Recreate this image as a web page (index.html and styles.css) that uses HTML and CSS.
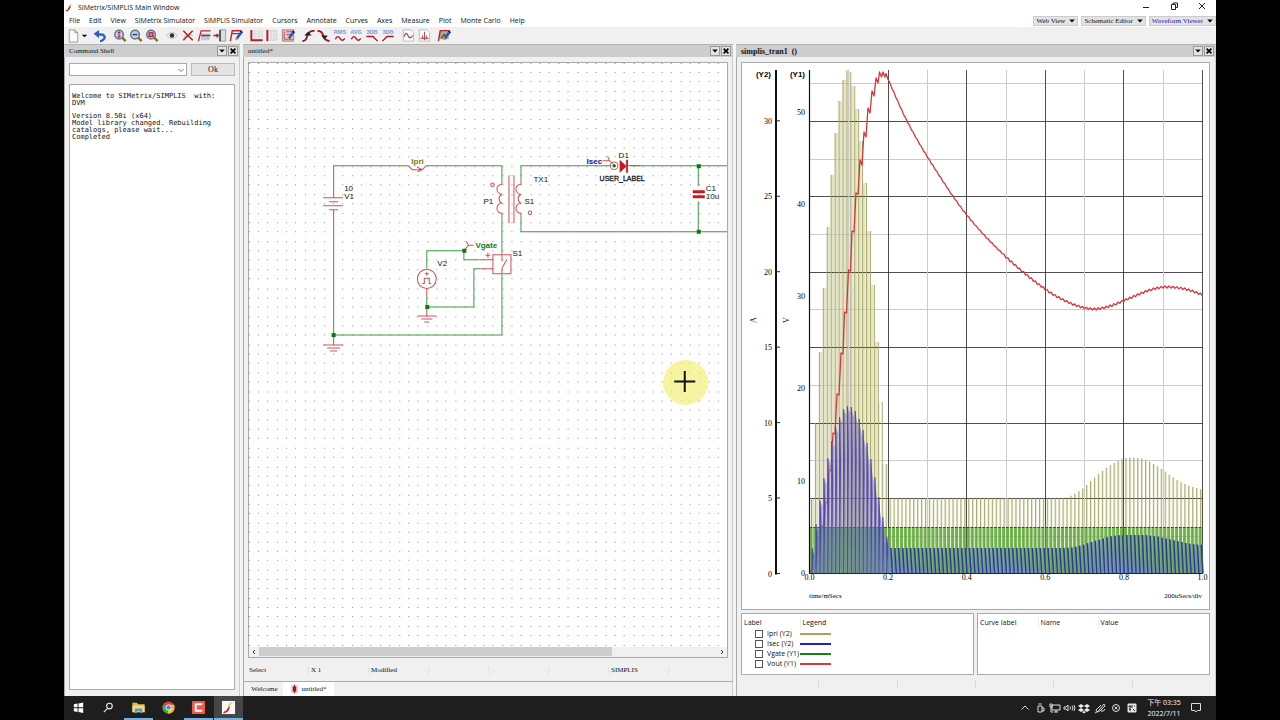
FILE: index.html
```html
<!DOCTYPE html>
<html lang="en">
<head>
<meta charset="utf-8">
<title>SIMetrix/SIMPLIS Main Window</title>
<link rel="stylesheet" href="styles.css">
</head>
<body>
<svg class="defs" aria-hidden="true">
  <defs>
    <symbol id="lens" viewBox="0 0 16 16"><path d="M10 10l4 4" stroke="#8a6a20" stroke-width="2.4"/><circle cx="7" cy="7" r="4.6" fill="#c3cfee" stroke="#6d7680" stroke-width="1.6"/></symbol>
    <symbol id="pencil" viewBox="0 0 16 16"><path d="M7 13l1-3 5-7 2 2-5 7z" fill="#2e56c8"/><path d="M7 13l1-3 2 2z" fill="#e8b830"/><path d="M13 3l2 2" stroke="#223" stroke-width="1.5"/></symbol>
    <symbol id="drop" viewBox="0 0 10 10"><path d="M1.500 3h7L5 7z" fill="#000"/></symbol>
    <symbol id="cross" viewBox="0 0 10 10"><path d="M2 2l6 6M8 2l-6 6" stroke="#000" stroke-width="2.2"/></symbol>
    <symbol id="logo" viewBox="0 0 14 14"><path d="M13 0C8 1 9 5 8 7l-2-1C7 3 8 1 13 0z" fill="#f0b020"/><path d="M9 5C8 9 6 13 1 13c0-2 1-2 2-2 2-1 2-4 4-6z" fill="#c8201c"/></symbol>
  </defs>
</svg>
<div class="window">
  <header class="titlebar">
    <svg class="app-icon"><use href="#logo"/></svg>
    <h1 class="title">SIMetrix/SIMPLIS Main Window</h1>
    <div class="win-controls">
      <button class="win-btn" aria-label="Minimize"><svg viewBox="0 0 10 10"><path d="M2 6.500h6" stroke="#222"/></svg></button>
      <button class="win-btn" aria-label="Restore"><svg viewBox="0 0 10 10"><path d="M2.500 3.500h4v5h-4zM4 3.500V2h4.500v4.500h-2" fill="none" stroke="#222"/></svg></button>
      <button class="win-btn" aria-label="Close"><svg viewBox="0 0 10 10"><path d="M2 2l6 6M8 2l-6 6" stroke="#222"/></svg></button>
    </div>
  </header>
  <nav class="menubar">
    <button>File</button><button>Edit</button><button>View</button><button>SIMetrix Simulator</button><button>SIMPLIS Simulator</button><button>Cursors</button><button>Annotate</button><button>Curves</button><button>Axes</button><button>Measure</button><button>Plot</button><button>Monte Carlo</button><button>Help</button>
    <div class="views">
      <button class="view">Web View<svg><use href="#drop"/></svg></button>
      <button class="view">Schematic Editor<svg><use href="#drop"/></svg></button>
      <button class="view current">Waveform Viewer<svg><use href="#drop"/></svg></button>
    </div>
  </nav>
  <div class="toolbar">
    <div class="tools">
      <button aria-label="New"><svg viewBox="0 0 16 16"><path d="M4 2h6l3 3v10H4z" fill="#fafafa" stroke="#999"/><path d="M10 2v3h3" fill="none" stroke="#999"/></svg></button>
      <button class="slim" aria-label="New options"><svg viewBox="0 0 8 16"><path d="M1 7h6L4 10z"/></svg></button>
    </div>
    <div class="tools">
      <button aria-label="Undo"><svg viewBox="0 0 16 16"><path d="M5 7h4c4 0 5 3 3 5-1 1-2 2-4 2" fill="none" stroke="#2a62c8" stroke-width="2.600"/><path d="M1 6l6-4v9z" fill="#2a62c8"/></svg></button>
    </div>
    <div class="tools">
      <button aria-label="Zoom vertical"><svg viewBox="0 0 16 16"><use href="#lens"/><path d="M7 4v6M5.500 5.500L7 4l1.500 1.500M5.500 8.500L7 10l1.500-1.500" stroke="#a01030" fill="none"/></svg></button>
      <button aria-label="Zoom out"><svg viewBox="0 0 16 16"><use href="#lens"/><path d="M4.500 7h5" stroke="#223a90" stroke-width="1.500"/></svg></button>
      <button aria-label="Zoom area"><svg viewBox="0 0 16 16"><use href="#lens"/><path d="M5 5h4v4H5z" fill="#d88" stroke="#a01040" stroke-width="1.200"/></svg></button>
    </div>
    <div class="tools">
      <button aria-label="Show curves"><svg viewBox="0 0 16 16"><path d="M2 8q6-6 12 0q-6 6-12 0z" fill="#fff" stroke="#bbb"/><circle cx="8" cy="8" r="2.500" fill="#334"/></svg></button>
      <button aria-label="Delete curve"><svg viewBox="0 0 16 16"><path d="M3 11q5-6 10-3" fill="none" stroke="#aaa"/><path d="M3 3l10 10M13 3L3 13" stroke="#b02028" stroke-width="1.600"/></svg></button>
      <button aria-label="Stack curves"><svg viewBox="0 0 16 16"><path d="M5 6h9v7H5z" fill="#b8c8e8"/><path d="M2 14L5 3h10M5 8h10" fill="none" stroke="#c02030" stroke-width="1.400"/></svg></button>
      <button aria-label="Move curve"><svg viewBox="0 0 16 16"><path d="M8 2v12h6V2z" fill="#d8e0dc" stroke="#999"/><path d="M8 2v12" stroke="#333" stroke-width="1.500"/><path d="M1 8h6M5 6v4" stroke="#a02030" stroke-width="1.500"/></svg></button>
      <button aria-label="Edit curve"><svg viewBox="0 0 16 16"><path d="M2 14L4 3h9v4M4 6h8" fill="none" stroke="#c02030" stroke-width="1.500"/><use href="#pencil"/></svg></button>
    </div>
    <div class="tools">
      <button aria-label="New axis"><svg viewBox="0 0 16 16"><path d="M4 3h11v9H4zM7 3v9M11 3v9M4 6h11M4 9h11" fill="#e8efe8" stroke="#ddd"/><path d="M3 2v11h12" fill="none" stroke="#c01828" stroke-width="2"/></svg></button>
      <button aria-label="New y axis"><svg viewBox="0 0 16 16"><path d="M4 3h9v10H4zM7 3v10M10 3v10" fill="#eee" stroke="#ccc"/><path d="M3 2v12" stroke="#c01828" stroke-width="2"/></svg></button>
      <button aria-label="Edit axis"><svg viewBox="0 0 16 16"><path d="M2 2h12v12H2z" fill="#e8c8c8" stroke="#a87878"/><path d="M4 4v8h9M6 4h7M6 7h7" stroke="#a85060" fill="none"/><use href="#pencil"/></svg></button>
    </div>
    <div class="tools">
      <button aria-label="Rising edge"><svg viewBox="0 0 16 16"><path d="M2 14q4 0 5-5t6-6h2" fill="none" stroke="#801828" stroke-width="2"/><path d="M4 8h8L8 4z" fill="#222"/></svg></button>
      <button aria-label="Falling edge"><svg viewBox="0 0 16 16"><path d="M1 3q5 0 6 5t7 6" fill="none" stroke="#a01828" stroke-width="2"/><path d="M5 8h7L9 12z" fill="#222"/></svg></button>
      <button aria-label="RMS"><svg viewBox="0 0 16 16"><text x="8" y="6" class="tag">RMS</text><path d="M3 12q2.500-5 5-1t5 0" fill="none" stroke="#a81828" stroke-width="1.500"/></svg></button>
      <button aria-label="Average"><svg viewBox="0 0 16 16"><text x="8" y="6" class="tag">AVG</text><path d="M3 12q2.500-5 5-1t5 0" fill="none" stroke="#a81828" stroke-width="1.500"/></svg></button>
      <button aria-label="Low pass 3dB"><svg viewBox="0 0 16 16"><text x="8" y="6" class="tag">3DB</text><path d="M2 9h7l5 5" fill="none" stroke="#a81828" stroke-width="1.500"/></svg></button>
      <button aria-label="High pass 3dB"><svg viewBox="0 0 16 16"><text x="8" y="6" class="tag">3DB</text><path d="M2 14l5-5h7" fill="none" stroke="#a81828" stroke-width="1.500"/></svg></button>
    </div>
    <div class="tools">
      <button aria-label="Transient"><svg viewBox="0 0 16 16"><path d="M3 2h8l3 3v9H3z" fill="#fff" stroke="#bbb"/><path d="M4 9q2-6 4-1t5 0" fill="none" stroke="#b83840" stroke-width="1.300"/></svg></button>
      <button aria-label="Spectrum"><svg viewBox="0 0 16 16"><path d="M3 2h8l3 3v9H3z" fill="#fff" stroke="#bbb"/><path d="M4 11h9M8.500 4v9M6.500 8v4M10.500 8v4" stroke="#b83840"/></svg></button>
    </div>
    <div class="tools">
      <button aria-label="Edit graph"><svg viewBox="0 0 16 16"><path d="M3 4h10v8H3z" fill="#9ab89a"/><path d="M2 14L4 3h10M5 11l3-4 3 2" fill="none" stroke="#b82030" stroke-width="1.500"/><use href="#pencil"/></svg></button>
    </div>
  </div>

  <main class="docks">
    <section class="dock">
      <header class="dock-head"><h2>Command Shell</h2><button aria-label="Dock menu"><svg><use href="#drop"/></svg></button><button aria-label="Close dock"><svg><use href="#cross"/></svg></button></header>
      <div class="shell">
        <form class="command">
          <div class="combo"><select aria-label="Command"><option></option></select><svg viewBox="0 0 8 8"><path d="M1.500 3L4 5.500 6.500 3" fill="none" stroke="#777"/></svg></div>
          <button class="ok" type="button">Ok</button>
        </form>
        <div class="log"><p>Welcome to SIMetrix/SIMPLIS&nbsp; with:<br>DVM</p><p>Version 8.50i (x64)<br>Model library changed. Rebuilding<br>catalogs, please wait...<br>Completed</p></div>
      </div>
    </section>

    <section class="dock">
      <header class="dock-head"><h2>untitled*</h2><button aria-label="Dock menu"><svg><use href="#drop"/></svg></button><button aria-label="Close dock"><svg><use href="#cross"/></svg></button></header>
      <div class="sheet">
        <svg class="schematic" viewBox="249 63 478 583" preserveAspectRatio="xMinYMin slice">
          <path id="dots" fill="#8c8c8c"/>
          <g class="wire">
            <path d="M333.500 185V165.500H408M426 165.500H501.500V180M333.500 221V334.500H501.500V274M501.500 218V254M333.500 334V338"/>
            <path d="M520.500 180V165.500H610M630 165.500H728M520.500 218V231.500H728M697.500 165V186M697.500 201V231"/>
            <path d="M426.500 268V250.500H463.500V259.500H478M426.500 296V306.500H473.500V268.500H480"/>
          </g>
          <g class="part">
            <path d="M333.500 185V197M323 197.500H343M329 201.500H338M323 205.500H343M329 209.500H338M333.500 209V221"/>
            <path d="M333.500 335V344M323 344.500H343M327 347.500H340M330 350.500H337"/>
            <path d="M408 165.500l4 4H422l4-4M417 167l5 2.500-5 2"/>
            <path d="M501.500 180V184a5 5 0 0 0 0 10a5 5 0 0 0 0 9a5 5 0 0 0 0 10V218M520.500 180V184a5 5 0 0 0 0 10a5 5 0 0 0 0 9a5 5 0 0 0 0 10V218"/>
            <path d="M508.500 175V223M513.500 175V223"/>
            <circle cx="492" cy="184.500" r="1.800"/><circle cx="529.500" cy="212.500" r="1.800"/>
            <path d="M492.500 254.500h18v19h-18zM478 259.500h14M480 268.500h12M501.500 254v7M501.500 274v-6l5-9M485 255h5M487.500 252.500v5"/>
            <circle cx="426.500" cy="278.500" r="9.500"/><path d="M424.500 273.500h4M426.500 271.500v4M422 283h2v-5h5v5h2M426.500 288V296"/>
            <path d="M426.500 306V315M417 315.500H436M421 318.500H432M424 321.500H429"/>
            <path d="M464 250l4-5M466 241l2 4h5M607 156l2 5M602 160.500h7l3 3"/>
            <circle cx="613.500" cy="165.500" r="3.700"/><path d="M627 165.500H640"/>
          </g>
          <path d="M619 159.500v13l7-6.500zM625.500 159.500h1.800v13h-1.800zM692 190h12v3h-12zM692 195h12v3h-12z" fill="#d0141c"/>
          <g fill="#087a12"><path d="M331.500 332.500h4v4h-4zM425 304.500h4v4h-4zM462 248.500h4v4h-4zM696 164h4v4h-4zM696 229.500h4v4h-4z"/><circle cx="613.500" cy="165.500" r="1.700"/></g>
          <g class="names">
            <text x="344" y="191">10</text><text x="344" y="199">V1</text><text x="483" y="204">P1</text><text x="533" y="182">TX1</text><text x="524" y="204">S1</text><text x="512" y="256">S1</text><text x="437" y="266">V2</text><text x="618" y="158">D1</text><text x="705" y="191">C1</text><text x="705" y="199">10u</text><text x="599" y="181" class="strong">USER_LABEL</text>
          </g>
          <g class="probes"><text x="411" y="164" fill="#7c7a10">Ipri</text><text x="586" y="164" fill="#10109a">Isec</text><text x="475" y="248" fill="#0a7a18">Vgate</text></g>
          <circle cx="685" cy="382" r="22.500" fill="#f2ec62" opacity="0.600"/>
          <path d="M673.500 381h21M684 370.500v21" stroke="#111" stroke-width="2"/>
        </svg>
        <div class="scroll"><svg viewBox="0 0 10 10"><path d="M6 3L4 5l2 2" fill="none" stroke="#333"/></svg><div class="trough"><div class="thumb"></div></div><svg viewBox="0 0 10 10"><path d="M4 3l2 2-2 2" fill="none" stroke="#333"/></svg></div>
      </div>
      <div class="status"><span>Select</span><span>X 1</span><span>Modified</span><span></span><span></span><span></span><span>SIMPLIS</span><span></span></div>
      <div class="tabs"><button>Welcome</button><button class="on"><svg viewBox="0 0 8 10"><path d="M0 0h8v10H0z" fill="#e4d8d8"/><path d="M4 0v10" stroke="#a01818"/><path d="M2 2h4v6H2z" fill="#b01018"/></svg>untitled*</button></div>
    </section>

    <section class="dock">
      <header class="dock-head"><h2 class="active">simplis_tran1&nbsp; ()</h2><button aria-label="Dock menu"><svg><use href="#drop"/></svg></button><button aria-label="Close dock"><svg><use href="#cross"/></svg></button></header>
      <div class="waves">
        <div class="plot"><svg id="plot" viewBox="742 63 467 546" preserveAspectRatio="xMinYMin meet"></svg></div>
        <div class="lists">
          <div class="list">
            <table class="legend">
              <thead><tr><th>Label</th><th>Legend</th></tr></thead>
              <tbody>
                <tr><td><label><input type="checkbox">Ipri (Y2)</label></td><td><i class="ipri"></i></td></tr>
                <tr><td><label><input type="checkbox">Isec (Y2)</label></td><td><i class="isec"></i></td></tr>
                <tr><td><label><input type="checkbox">Vgate (Y1)</label></td><td><i class="vgate"></i></td></tr>
                <tr><td><label><input type="checkbox">Vout (Y1)</label></td><td><i class="vout"></i></td></tr>
              </tbody>
            </table>
          </div>
          <div class="list">
            <table class="values"><thead><tr><th>Curve label</th><th>Name</th><th>Value</th></tr></thead></table>
          </div>
        </div>
        <div class="cells"><span></span><span></span><span></span><span></span><span></span><span></span></div>
      </div>
    </section>
  </main>

  <footer class="taskbar">
    <button class="task" aria-label="Start"><svg viewBox="0 0 16 16"><path d="M3 4.500l4-.7v4H3zM8 3.600l5-.9v5.100H8zM3 8.700h4v4l-4-.7zM8 8.700h5v5.100l-5-.9z" fill="#fff"/></svg></button>
    <button class="task" aria-label="Search"><svg viewBox="0 0 16 16"><circle cx="9" cy="6.500" r="3" fill="none" stroke="#eee" stroke-width="1.200"/><path d="M7 9l-4 4" stroke="#eee" stroke-width="1.200"/></svg></button>
    <button class="task run" aria-label="File Explorer"><svg viewBox="0 0 16 16"><path d="M1.500 3h5l1 1.500h7V13h-13z" fill="#e8b84c"/><path d="M1.500 6h13v7h-13z" fill="#f6d779"/><path d="M4 9h8v5h-2v-2H6v2H4z" fill="#4a9fd0"/></svg></button>
    <button class="task" aria-label="Chrome"><svg viewBox="0 0 16 16"><circle cx="8" cy="8" r="6.500" fill="#e04234"/><path d="M8 8L2.400 4.700A6.500 6.500 0 0 0 7.500 14.500z" fill="#3aa757"/><path d="M8 8h6.500A6.500 6.500 0 0 1 7.300 14.500z" fill="#fbc116"/><path d="M8 5h5.800a6.500 6.500 0 0 1 .7 3H8z" fill="#fbc116"/><circle cx="8" cy="8" r="3.100" fill="#fff"/><circle cx="8" cy="8" r="2.400" fill="#4285f4"/></svg></button>
    <button class="task run" aria-label="Camtasia"><svg viewBox="0 0 16 16"><rect x="1" y="1" width="14" height="14" rx="1" fill="#f0584c"/><path d="M12 4.500H5v7h7" fill="none" stroke="#fff" stroke-width="2"/></svg></button>
    <button class="task run focus" aria-label="SIMetrix"><svg viewBox="0 0 16 16"><path d="M1 1h14v14H1z" fill="#f8f8f8"/><path d="M14 1.500C10 3 10 5 9 8l-2 1C8 5 9 2 14 1.500z" fill="#f0b828"/><path d="M9.500 7C9 11 7 14 2.500 14c0-2 1-2 2-2C7 11 6 9 9.500 7z" fill="#c81c28"/></svg></button>
    <div class="tray">
      <svg class="wide" viewBox="0 0 16 14"><path d="M3.500 8.500L7 5l3.500 3.500"/></svg>
      <svg viewBox="0 0 14 14"><path d="M4 5h4v6H4zM8 7h2v3H8M4.500 3h3"/></svg>
      <svg viewBox="0 0 14 14"><path d="M4 4h8v5H4zM6 11h4M8 9v2M2 3h2v3H2zM3 6v5h2"/></svg>
      <svg viewBox="0 0 14 14"><path d="M2 6h2l2-2v6L4 8H2zM8 5.500q1 1.500 0 3M10 4.500q2 2.500 0 5M12 4q2 3 0 6"/></svg>
      <svg class="wide" viewBox="0 0 16 14"><path d="M5 3l3 2-3 2-3-2zM11 3l3 2-3 2-3-2zM5 7l3 2-3 2-3-2zM11 7l3 2-3 2-3-2zM8 10l2 1-2 1.500L6 11z" fill="#eee" stroke="none"/></svg>
      <svg class="wide" viewBox="0 0 16 14"><path d="M3 12q3-1 5-4l4-5 1 2-5 5q-4 2-4-1l5-5M9 10q3 1 4-2"/></svg>
      <svg class="wide" viewBox="0 0 16 14"><circle cx="8" cy="7" r="3.500"/><path d="M6.500 5.500l3 3M9.500 5.500l-3 3"/></svg>
      <svg class="wide" viewBox="0 0 16 14"><path d="M4 3h8v8H4z" fill="#eee"/><path d="M5 5h2v1H5zM8 4v3M10 5h1M5 8h2M6 7v3M9 8l2 2" stroke="#222"/></svg>
      <time class="clock">下午 03:35<br>2022/7/11</time>
      <svg class="wide" viewBox="0 0 16 14"><path d="M3.500 2.500h9v7h-3L8 11 7 9.500H3.500z"/></svg>
    </div>
  </footer>
</div>
<script src="chart.js"></script>
</body>
</html>
```
FILE: styles.css
```css
* { box-sizing: border-box; }
body { margin: 0; background: #000; font-family: "Open Sans", "Noto Sans", "Noto Sans CJK TC", sans-serif; font-size: 7px; color: #111; }
button { font: inherit; color: inherit; border: 0; padding: 0; background: none; }
.defs { position: absolute; width: 0; height: 0; }
.window { display: flex; flex-direction: column; height: 100vh; margin: 0 5%; background: #fff; }
.titlebar { display: flex; align-items: center; height: 14px; padding-left: 1px; }
.app-icon { width: 9px; height: 11px; }
.title { flex: 1; margin: 0 0 0 4px; font-size: 7px; font-weight: 400; }
.win-controls { display: flex; }
.win-btn { width: 28px; height: 12px; }
.win-btn svg { width: 10px; height: 10px; }
.menubar { display: flex; align-items: center; height: 13px; padding-left: 5px; gap: 9px; line-height: 12px; }
.views { display: flex; gap: 3px; margin-left: auto; font-family: "Liberation Serif", serif; font-size: 7px; }
.view { display: flex; align-items: center; gap: 3px; height: 10px; padding: 0 1px 0 2px; background: #e3e3e3; border: 1px solid #ccc; line-height: 8px; }
.view svg { width: 8px; height: 8px; }
.view.current { color: #1818c8; }

.toolbar { display: flex; gap: 4px; height: 17px; padding-left: 1px; background: #f0f0f0; align-items: center; }
.tools { display: flex; }
.tools button { width: 16px; height: 16px; }
.tools .slim { width: 7px; }
.tools svg { display: block; width: 100%; height: 15px; }
.tag { font: bold 6px "Liberation Sans", sans-serif; fill: #7898d8; text-anchor: middle; }

.docks { flex: 1; min-height: 0; display: grid; grid-template-columns: 176px 49fr 48fr; gap: 3px; background: #f4f4f4; }
.dock { display: flex; flex-direction: column; min-width: 0; min-height: 0; background: #f0f0f0; box-shadow: inset 1px 0 #aaa, inset -1px 0 #ccc; }
.dock-head { display: flex; align-items: center; gap: 1px; height: 13px; padding: 0 2px 0 5px; background: #cdcdcd; border-top: 1px solid #b4b4b4; font-family: "Liberation Serif", serif; }
.dock-head h2 { flex: 1; margin: 0; font-size: 7px; font-weight: 400; }
.dock-head h2.active { font-size: 8px; font-weight: 700; }
.dock-head button { width: 10px; height: 10px; background: #e4e4e4; border: 1px solid #999; }
.dock-head svg { display: block; width: 8px; height: 8px; }
.shell { flex: 1; display: flex; flex-direction: column; gap: 8px; padding: 6px 5px; min-height: 0; }
.command { display: flex; gap: 4px; height: 13px; }
.combo { position: relative; flex: 1; }
.combo select { display: block; width: 100%; height: 13px; appearance: none; background: #fff; border: 1px solid #aaa; border-radius: 0; font-size: 7px; }
.combo svg { position: absolute; right: 2px; top: 3px; width: 8px; height: 8px; }
.ok { width: 44px; border: 1px solid #bbb; background: #e4e4e4; font: 8px/8px "Liberation Serif", serif; }
.log { flex: 1; border: 1px solid #aaa; background: #fff; padding: 8px 2px; font: 7px/7px "DejaVu Sans Mono", monospace; white-space: nowrap; overflow: hidden; }
.log p { margin: 0 0 6px; }

.sheet { flex: 1; min-height: 0; display: flex; flex-direction: column; margin: 5px 5px 0; border: 1px solid #aaa; background: #fff; }
.schematic { flex: 1; min-height: 0; width: 100%; display: block; }
.wire { fill: none; stroke: #3c9c44; }
.part { fill: none; stroke: #d0505a; }
.names { font: 8px "Liberation Sans", sans-serif; fill: #111; }
.names .strong { font-size: 7px; stroke: #111; stroke-width: 0.25px; }
.probes { font: bold 8px "Liberation Sans", sans-serif; }
.scroll { display: flex; height: 10px; background: #f0f0f0; }
.scroll svg { width: 10px; height: 10px; }
.trough { flex: 1; }
.thumb { width: 77%; height: 9px; background: #cdcdcd; }
.status { display: flex; height: 24px; align-items: center; padding-left: 5px; border-bottom: 1px solid #aaa; font-family: "Liberation Serif", serif; font-size: 7px; line-height: 8px; }
.status span { flex: 0 1 60px; height: 8px; padding-left: 2px; border-left: 1px solid #e2e2e2; }
.status span:first-child { border-left: 0; padding-left: 1px; }
.tabs { display: flex; height: 14px; padding-left: 3px; font-family: "Liberation Serif", serif; font-size: 7px; }
.tabs button { width: 37px; }
.tabs .on { display: flex; align-items: center; justify-content: center; gap: 4px; width: 51px; background: #fff; }
.tabs svg { width: 7px; height: 10px; }

.waves { flex: 1; min-height: 0; display: flex; flex-direction: column; padding: 5px 6px 0 5px; }
.plot { flex: 1; min-height: 0; border: 1px solid #aaa; background: #fff; }
.plot svg { display: block; width: 100%; height: 100%; font-family: "Liberation Serif", serif; font-size: 8px; }
.lists { display: flex; gap: 3px; margin-top: 3px; height: 62px; }
.list { flex: 1; border: 1px solid #aaa; background: #fff; padding: 2px 2px; }
.list table { border-collapse: collapse; table-layout: fixed; width: 100%; }
.list th, .list td { padding: 0; font-weight: 400; text-align: left; line-height: 10px; height: 10px; vertical-align: middle; }
.list th { padding-left: 2px; border-left: 1px solid #eee; height: 13px; line-height: 12px; }
.list th:first-child { border-left: 0; padding-left: 0; }
.legend th:first-child { width: 56px; }
.values th { width: 60px; }
.values th:first-child { width: 58px; }
.values th:last-child { width: auto; }
.list label { display: flex; align-items: center; gap: 4px; height: 10px; padding-left: 11px; white-space: nowrap; }
.list input { appearance: none; flex: none; width: 8px; height: 8px; margin: 0; border: 1px solid #555; background: #fff; }
.list i { display: block; width: 31px; height: 2px; }
.ipri { background: #a6a65c; }
.isec { background: #2424b8; }
.vgate { background: #16801a; }
.vout { background: #d8383c; }
.cells { display: flex; height: 21px; padding: 5px 0 8px; }
.cells span { flex: 1; border-right: 1px solid #dcdcdc; }
.cells span:last-child { border: 0; }

.taskbar { display: flex; gap: 1px; height: 24px; background: #1e1e1e; color: #eee; }
.task { width: 29px; height: 24px; border-bottom: 2px solid transparent; }
.task svg { display: block; width: 15px; height: 15px; margin: 1px auto 0; }
.task.run { border-bottom-color: #76b0dc; }
.task.focus { background: #454545; }
.tray { display: flex; align-items: center; margin-left: auto; padding-right: 12px; }
.tray svg { width: 14px; height: 14px; fill: none; stroke: #ddd; }
.tray svg.wide { width: 16px; }
.clock { width: 48px; text-align: center; font: 7px/11px "Noto Sans", "Noto Sans CJK TC", sans-serif; }
.axis { stroke: #111; stroke-width: 2; }
.major { stroke: #222; stroke-width: 1; stroke-opacity: 0.8; }
.minor { stroke: #ccc; }
```
FILE: chart.js
```js
const plot = document.getElementById('plot');
const LEFT = 809.5, RIGHT = 1202.5, TOP = 70, BASE = 573.5;
const PERIOD = (RIGHT - LEFT) / 100;
const parts = [];
const line = (x1, y1, x2, y2, attrs) =>
  parts.push(`<line x1="${x1}" y1="${y1}" x2="${x2}" y2="${y2}" ${attrs}/>`);
const shape = (d, attrs) => parts.push(`<path d="${d}" ${attrs}/>`);
const label = (x, y, text, attrs = '') => parts.push(`<text x="${x}" y="${y}" ${attrs}>${text}</text>`);

// Smooth interpolation through a sorted list of [x, y] points.
function sample(points, x) {
  let i = 0;
  while (i < points.length - 2 && points[i + 1][0] < x) i++;
  const p0 = points[Math.max(i - 1, 0)], p1 = points[i], p2 = points[i + 1];
  const p3 = points[Math.min(i + 2, points.length - 1)];
  const w = p2[0] - p1[0], t = Math.min(Math.max((x - p1[0]) / w, 0), 1);
  const m1 = (p2[1] - p0[1]) / (p2[0] - p0[0]) * w;
  const m2 = (p3[1] - p1[1]) / (p3[0] - p1[0]) * w;
  const t2 = t * t, t3 = t2 * t;
  return (2 * t3 - 3 * t2 + 1) * p1[1] + (t3 - 2 * t2 + t) * m1 + (3 * t2 - 2 * t3) * p2[1] + (t3 - t2) * m2;
}

const primaryStart = [498, 423, 352, 288, 227, 175, 133, 101, 80, 70, 72, 86, 109, 141, 183, 231, 285, 342, 402, 464];
const secondaryStart = [548, 524, 500, 478, 458, 441, 427, 417, 409, 406, 407, 411, 419, 430, 443, 459, 477, 497, 517, 537];
const primaryTail = [[886, 498], [1000, 498], [1060, 498], [1068, 497], [1082, 489], [1094, 478], [1106, 468], [1118, 461], [1126, 458], [1138, 458], [1146, 460], [1160, 468], [1174, 478], [1187, 485], [1203, 490]];
const secondaryTail = [[886, 548], [1000, 548], [1060, 548], [1074, 547], [1094, 541], [1112, 536], [1135, 535], [1152, 536], [1172, 540], [1190, 544], [1203, 545]];

// Pale body of the primary current pulses
for (let k = 0; k < 100; k++) {
  const spike = LEFT + PERIOD * k + 2;
  const early = k < 20;
  const top = early ? primaryStart[k] : sample(primaryTail, spike);
  const next = k < 19 ? primaryStart[k + 1] : top;
  const fillTop = early ? Math.max(top, next) : top;
  const width = k < 17 ? 3 : 1.4;
  shape(`M${spike} ${BASE}V${fillTop}h${width}V${BASE}z`, `fill="#dfdfbd" fill-opacity="${early ? 0.85 : 0.7}"`);
}

// Grid
for (let i = 1; i <= 13; i++) {
  const y = Math.round(BASE - i * 37.72) + 0.5;
  line(LEFT, y, RIGHT, y, `class="${i % 2 ? 'minor' : 'major'}"`);
}
for (let i = 1; i <= 10; i++) {
  const x = Math.round(LEFT + i * 39.3 - 0.5) + 0.5;
  line(x, TOP, x, BASE, `class="${i % 2 ? 'minor' : 'major'}"`);
}

// Primary current spikes and gate pulses
for (let k = 0; k < 100; k++) {
  const x = LEFT + PERIOD * k, spike = x + 2;
  const top = k < 20 ? primaryStart[k] : sample(primaryTail, spike);
  line(spike, BASE, spike, top, 'stroke="#a0a05e" stroke-width="0.9"');
  shape(`M${x} ${BASE}V527h3V${BASE}z`, 'fill="#5faa3c" fill-opacity="0.85"');
  line(x, 527.5, x + 2.6, 527.5, 'stroke="#1c5c1c"');
}

// Output voltage: stepped charge-up followed by a slow rippling decay
const rise = [[809.5, 573], [814, 567], [819, 548], [822.5, 526], [826.5, 502], [830, 470], [834, 433], [838, 394], [842, 353], [845.5, 312], [849.5, 270], [853, 231], [857, 193], [861, 160], [865, 132], [869, 108], [873, 91], [877, 78], [880.5, 72], [884, 72]];
let d = `M${rise[0]}`;
for (let i = 1; i < rise.length; i++) {
  const [x, y] = rise[i];
  const dip = i > 12 ? 5 : 1;
  d += `L${x - 1} ${y}L${x + 1} ${y + dip}`;
}
const decay = [[886, 74], [888, 79], [906.5, 120], [930, 161], [966, 214], [1005, 256], [1045, 289], [1070, 303], [1092, 309], [1110, 306], [1130, 298], [1150, 290], [1165, 287], [1185, 289], [1203, 295]];
for (let x = 886; x < RIGHT; x += PERIOD) {
  const swing = x < 1000 ? 0.5 : 1;
  d += `L${x} ${sample(decay, x) - swing}L${x + 2} ${sample(decay, x + 2) + swing}`;
}
shape(d, 'fill="none" stroke="#d8343c" stroke-width="1.3" stroke-linejoin="round"');

// Secondary current
for (let k = 0; k < 100; k++) {
  const x = LEFT + PERIOD * k + 2;
  const early = k < 20;
  const top = early ? secondaryStart[k] : sample(secondaryTail, x);
  if (early) {
    const next = k < 19 ? secondaryStart[k + 1] : top;
    const body = Math.max(top, next) + 6;
    shape(`M${x} ${BASE}V${top}L${x + 3.2} ${body}V${BASE}z`, 'fill="#9488d0" fill-opacity="0.72"');
    shape(`M${x} ${BASE}V${Math.max(527, body)}h3.2V${BASE}z`, 'fill="#5c80a0" fill-opacity="0.6"');
    shape(`M${x} ${top}h1.2L${x + 2} ${top + (BASE - top) * 0.3}L${x + 1} ${BASE}h-0.8z`, 'fill="#4038ac" fill-opacity="0.8"');
  } else {
    shape(`M${x} ${BASE}V${top}H${x + 2}L${x + 3} ${BASE}z`, 'fill="#6f86bc" fill-opacity="0.8"');
    shape(`M${x} ${top}h1.5L${x + 3} ${BASE}H${x + 1.6}z`, 'fill="#2838a0"');
  }
}

// Axes
line(LEFT, TOP, LEFT, BASE + 0.5, 'stroke="#111" stroke-width="1.2"');
line(LEFT, BASE, RIGHT, BASE, 'stroke="#223"');
line(776, TOP, 776, BASE + 1, 'class="axis"');
for (let v = 0; v <= 30; v += 5) {
  const y = BASE - v * 15.09;
  line(776, y, 780, y, 'stroke="#222"');
  label(772, y + 3, v, 'text-anchor="end"');
}
for (let v = 0; v <= 50; v += 10) label(805, 576 - v * 9.23, v, 'text-anchor="end"');
['0.0', '0.2', '0.4', '0.6', '0.8', '1.0'].forEach((t, i) => label(LEFT + i * 78.6, 580, t, 'text-anchor="middle"'));
label(771, 77, '(Y2)', 'text-anchor="end" font-weight="bold" font-family="Liberation Sans"');
label(805, 77, '(Y1)', 'text-anchor="end" font-weight="bold" font-family="Liberation Sans"');
label(0, 0, 'A', 'transform="translate(756 323) rotate(-90)"');
label(0, 0, 'V', 'transform="translate(789 323) rotate(-90)"');
label(809, 598, 'time/mSecs', 'font-size="7"');
label(1202, 598, '200uSecs/div', 'text-anchor="end" font-size="7"');
plot.innerHTML = parts.join('');

// Schematic grid dots
let dots = '';
for (let i = -1; i < 110; i++) {
  for (let j = 0; j < 110; j++) {
    dots += `M${Math.round(258 + i * 9.37)} ${Math.round(72 + (j - 1) * 9.37)}h1v1h-1z`;
  }
}
document.getElementById('dots').setAttribute('d', dots);
```
